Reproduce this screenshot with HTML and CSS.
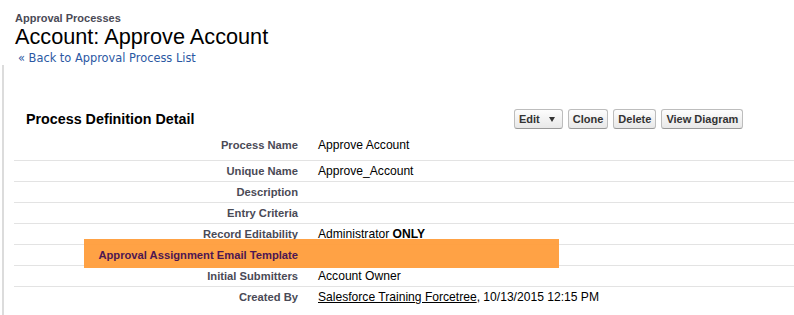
FILE: index.html
```html
<!DOCTYPE html>
<html lang="en">
<head>
	<meta charset="UTF-8">
	<title>Account: Approve Account</title>
	<link rel="stylesheet" href="styles.css">
</head>
<body>

	<div class="page-head">
		<h2 class="page-type">Approval Processes</h2>
		<h1 class="page-title">Account: Approve Account</h1>
		<a class="back-link" href="#">&laquo; Back to Approval Process List</a>
	</div>

	<div class="main">
		<div class="detail-head">
			<h3 class="detail-title">Process Definition Detail</h3>
			<div class="buttons">
				<button class="btn">Edit <span class="arrow"></span></button>
				<button class="btn">Clone</button>
				<button class="btn">Delete</button>
				<button class="btn">View Diagram</button>
			</div>
		</div>

		<div class="rows">
			<div class="row first">
				<div class="label">Process Name</div>
				<div class="value">Approve Account</div>
			</div>
			<div class="row">
				<div class="label">Unique Name</div>
				<div class="value">Approve_Account</div>
			</div>
			<div class="row">
				<div class="label">Description</div>
				<div class="value"></div>
			</div>
			<div class="row">
				<div class="label">Entry Criteria</div>
				<div class="value"></div>
			</div>
			<div class="row">
				<div class="label">Record Editability</div>
				<div class="value">Administrator <b>ONLY</b></div>
			</div>
			<div class="row marked">
				<span class="mark"></span>
				<div class="label">Approval Assignment Email Template</div>
				<div class="value"></div>
			</div>
			<div class="row">
				<div class="label">Initial Submitters</div>
				<div class="value">Account Owner</div>
			</div>
			<div class="row last">
				<div class="label">Created By</div>
				<div class="value"><a href="#">Salesforce Training Forcetree</a>, 10/13/2015 12:15 PM</div>
			</div>
		</div>
	</div>

</body>
</html>
```

FILE: styles.css
```css
* {
	padding: 0;
	margin: 0;
	box-sizing: border-box;
}

body {
	font-family: Arial, "Liberation Sans", sans-serif;
	font-size: 12px;
	color: #000;
	background-color: #fff;
}

/* page header */
.page-head {
	padding: 12px 0 0 15px;
}

.page-type {
	font-size: 11px;
	line-height: 13px;
	font-weight: bold;
	color: #4a4a56;
}

.page-title {
	font-size: 21.7px;
	line-height: 24px;
	font-weight: normal;
	color: #000;
}

.back-link {
	display: block;
	margin: 2px 0 0 3px;
	font-family: Verdana, "DejaVu Sans", sans-serif;
	font-size: 11.4px;
	line-height: 14px;
	color: #2b58a3;
	text-decoration: none;
}

/* detail block */
.main {
	margin-left: 2px;
	border-left: 2px solid #dcdcdc;
	padding: 44px 0 20px 10px;
}

.detail-head {
	display: flex;
	align-items: center;
	height: 20px;
	margin-bottom: 4px;
}

.detail-title {
	width: 500px;
	padding-left: 12px;
	font-size: 14.3px;
	font-weight: bold;
	color: #000;
}

.buttons {
	display: flex;
	gap: 5px;
}

.btn {
	height: 20px;
	padding: 0 4px;
	font-family: Arial, "Liberation Sans", sans-serif;
	font-size: 11px;
	font-weight: bold;
	color: #333;
	background: linear-gradient(#fdfdfd, #e8e8e8);
	border: 1px solid #bdbdbd;
	border-bottom-color: #999;
	border-radius: 3px;
	display: flex;
	align-items: center;
}

.btn .arrow {
	display: inline-block;
	margin: 0 3px 0 9px;
	border-left: 3.5px solid transparent;
	border-right: 3.5px solid transparent;
	border-top: 5px solid #333;
}

/* rows */
.row {
	display: grid;
	grid-template-columns: 284px 1fr;
	column-gap: 20px;
	padding: 4px 0 3px;
	line-height: 13px;
	border-bottom: 1px solid #e3e3e3;
	position: relative;
}

.row.first {
	padding: 6px 0 8px;
}

.row.last {
	border-bottom: none;
}

.label {
	text-align: right;
	font-size: 11.2px;
	font-weight: bold;
	color: #4a4a56;
}

.value {
	font-size: 12.1px;
}

.value a {
	color: #000;
}

/* orange highlight over the template row */
.row .mark {
	position: absolute;
	left: 70px;
	top: -6px;
	width: 475px;
	height: 29px;
	background-color: #ff9e3d;
	opacity: 0.96;
}

.row.marked .label {
	position: relative;
	color: #4d1652;
}
```
